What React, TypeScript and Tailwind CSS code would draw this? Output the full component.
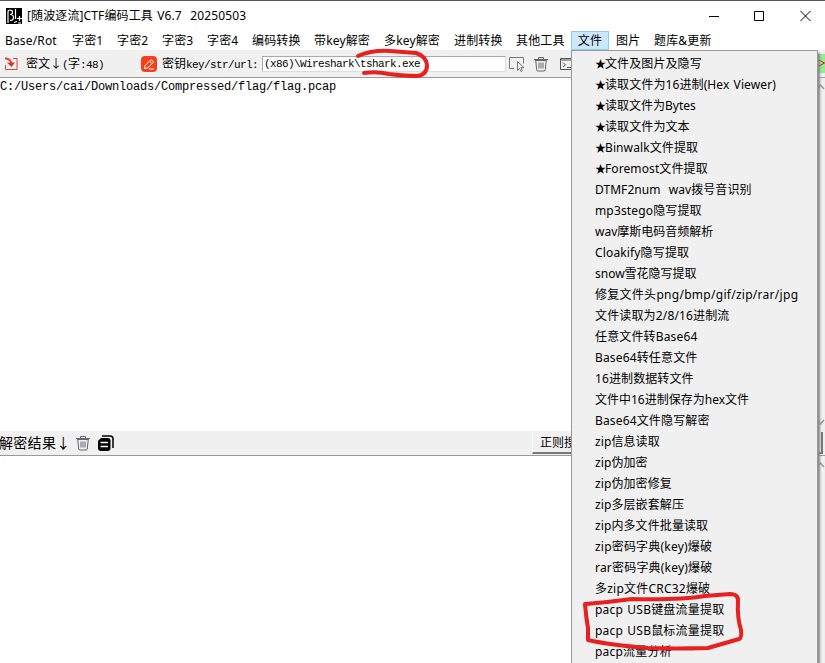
const menus = [
  { label: 'Base/Rot', width: 'w-[67px]' },
  { label: '字密1', width: 'w-[45px]' },
  { label: '字密2', width: 'w-[45px]' },
  { label: '字密3', width: 'w-[45px]' },
  { label: '字密4', width: 'w-[45px]' },
  { label: '编码转换', width: 'w-[62px]' },
  { label: '带key解密', width: 'w-[70px]' },
  { label: '多key解密', width: 'w-[70px]' },
  { label: '进制转换', width: 'w-[62px]' },
  { label: '其他工具', width: 'w-[55px]' },
  { label: '文件', width: 'w-[38px]', active: true },
  { label: '图片', width: 'w-[38px]' },
  { label: '题库&更新', width: 'w-[72px]' },
];

const fileItems = [
  { label: '★文件及图片及隐写' },
  { label: '★读取文件为16进制(Hex Viewer)' },
  { label: '★读取文件为Bytes', tracking: 'tracking-normal' },
  { label: '★读取文件为文本' },
  { label: '★Binwalk文件提取' },
  { label: '★Foremost文件提取' },
  { label: 'DTMF2num  wav拨号音识别', tracking: 'tracking-[0.05px]' },
  { label: 'mp3stego隐写提取', tracking: 'tracking-[0.15px]' },
  { label: 'wav摩斯电码音频解析', tracking: 'tracking-normal' },
  { label: 'Cloakify隐写提取', tracking: 'tracking-[0.15px]' },
  { label: 'snow雪花隐写提取', tracking: 'tracking-normal' },
  { label: '修复文件头png/bmp/gif/zip/rar/jpg', tracking: 'tracking-[0.28px]' },
  { label: '文件读取为2/8/16进制流', tracking: 'tracking-[0.15px]' },
  { label: '任意文件转Base64', tracking: 'tracking-[0.15px]' },
  { label: 'Base64转任意文件', tracking: 'tracking-[0.15px]' },
  { label: '16进制数据转文件' },
  { label: '文件中16进制保存为hex文件', tracking: 'tracking-normal' },
  { label: 'Base64文件隐写解密', tracking: 'tracking-[0.15px]' },
  { label: 'zip信息读取' },
  { label: 'zip伪加密' },
  { label: 'zip伪加密修复' },
  { label: 'zip多层嵌套解压' },
  { label: 'zip内多文件批量读取' },
  { label: 'zip密码字典(key)爆破', tracking: 'tracking-[0.2px]' },
  { label: 'rar密码字典(key)爆破', tracking: 'tracking-[0.2px]' },
  { label: '多zip文件CRC32爆破', tracking: 'tracking-[0.22px]' },
  { label: 'pacp USB键盘流量提取', tracking: 'tracking-[0.2px]' },
  { label: 'pacp USB鼠标流量提取', tracking: 'tracking-[0.2px]' },
  { label: 'pacp流量分析', tracking: 'tracking-[0.2px]' },
];

// Full-width glyphs take exactly two half-width cells
const Mono = ({ text, large = false, className = '' }: { text: string; large?: boolean; className?: string }) => (
  <span className={`shrink-0 whitespace-pre leading-4 ${className}`}>
    {text.split(/([^\x00-\x7f]+)/).map((part, i) =>
      i % 2 ? (
        <span key={i} className={`font-['Noto_Sans_CJK_SC',sans-serif] ${large ? 'text-[14px]' : 'text-[12px]'}`}>
          {part}
        </span>
      ) : (
        <span
          key={i}
          className={`font-['Liberation_Mono',monospace] ${large ? 'text-[12px] tracking-[-0.202px]' : 'text-[11px] tracking-[-0.601px]'}`}
        >
          {part}
        </span>
      ),
    )}
  </span>
);

const TrashIcon = () => (
  <svg className="h-4 w-4 shrink-0" viewBox="0 0 16 16" fill="none" stroke="#62666e">
    <path d="M1 3.500h14M2.500 4.500h11M5.500 3V1.500h5V3M2.700 4l1 9.800q.1 1.200 1.300 1.200h6q1.200 0 1.300-1.200l1-9.800M6 6.500v6M8 6.500v6M10 6.500v6" />
  </svg>
);

const App = () => {
  return (
    <div className="relative flex h-[663px] w-[825px] flex-col overflow-hidden bg-white font-['Noto_Sans','Noto_Sans_CJK_SC',sans-serif] text-[12px] text-black">
      {/* Title bar */}
      <header className="flex h-[31px] shrink-0 items-center border-t border-[#555] pl-[6px]">
        <svg className="mr-[5px] h-4 w-4" viewBox="0 0 16 16">
          <path fill="#000" d="M0 0h16v16H0z" />
          <path fill="none" stroke="#fff" strokeWidth="1.200" d="M2 15V4q0-2 2-2 2.500 0 2.500 2.200Q6.500 6.500 4 6.500q3.500 0 3.500 3T4 12.500M9.500 1v10M8 14.500l3-1M11 10.500h5M13.500 8v5M12 15h3" />
        </svg>
        <span className="whitespace-pre tracking-[0.12px] [word-spacing:1px]">[随波逐流]CTF编码工具 V6.7  20250503</span>
        <svg className="ml-auto mr-[14px] h-3 w-[104px]" viewBox="0 0 104 12" fill="none" stroke="#000">
          <path d="M2 6.500h10M47.500 1.500h9v9h-9zM93.500 1l10 10M103.500 1l-10 10" />
        </svg>
      </header>

      {/* Menu bar */}
      <nav className="flex h-[19px] shrink-0 pl-[5px] tracking-[0.15px]">
        {menus.map((menu) => (
          <div
            key={menu.label}
            className={`flex shrink-0 items-center whitespace-nowrap ${menu.width} ${menu.active ? 'mr-[7px] justify-center border border-[#91c9f7] bg-[#cce8ff]' : ''}`}
          >
            {menu.label}
          </div>
        ))}
      </nav>

      {/* Key input toolbar */}
      <div className="flex h-[28px] shrink-0 items-center border-b border-[#999] bg-[#f0f0f0] pl-1">
        <svg className="mr-[8px] h-[14px] w-[14px] shrink-0" viewBox="0 0 14 14" fill="none" stroke="#d9483b">
          <path d="M9 1.500h4v11H1.500V8" />
          <path d="M1 1.500q5 0 6.500 4.500" strokeWidth="2" />
          <path d="M3 5.500h8L7.500 10z" fill="#d33427" stroke="none" />
        </svg>
        <Mono className="w-[115px]" text="密文↓(字:48)" />
        <svg className="mr-[5px] h-4 w-4 shrink-0" viewBox="0 0 16 16" fill="none" stroke="#fff">
          <rect width="16" height="16" rx="4" fill="#f5401b" stroke="none" />
          <path d="M3.500 12.500l.7-3 6-6 2.500 2.500-6 6zM8.500 5l2.500 2.500M8 13h5" />
        </svg>
        <Mono className="w-[100px]" text="密钥key/str/url:" />
        <div className="flex h-4 w-[244px] shrink-0 items-center border border-[#aaa] border-b-[#ddd] border-r-[#ddd] bg-white pl-[1px]">
          <Mono text={'(x86)\\Wireshark\\tshark.exe'} />
        </div>
        <svg className="ml-[3px] mr-[8px] h-4 w-4 shrink-0" viewBox="0 0 16 16" fill="none" stroke="#777">
          <path d="M5 12.500H.500v-11h14v6M8.500 5.500v9l2-2 1.500 3 1.500-.8-1.500-3h3z" />
        </svg>
        <TrashIcon />
        <svg className="ml-[11px] h-4 w-4 shrink-0" viewBox="0 0 16 16" fill="none" stroke="#555">
          <path d="M.500 2.500h14v11H.500zM.500 4h14M3 6.500L5.500 9 3 11M7 11.500h5" />
        </svg>
        <svg className="ml-auto h-[19px] w-2" viewBox="0 0 8 19" fill="none">
          <path d="M0 0h8v19H0z" fill="#90ee90" />
          <path d="M0 6.500h3L7.500 9 3 11.500H0" stroke="#e11" />
        </svg>
      </div>

      {/* Source text */}
      <div className="flex h-[353px] shrink-0 items-start justify-between overflow-hidden">
        <Mono large text="C:/Users/cai/Downloads/Compressed/flag/flag.pcap" />
        <div className="flex h-full w-[7px] flex-col justify-between bg-[#f0f0f0] py-[6px]">
          <svg className="h-[6px] w-[7px]" viewBox="0 0 7 6" fill="none" stroke="#999" strokeWidth="1.500">
            <path d="M0 4l2.500-3L6 5" />
          </svg>
          <svg className="h-[6px] w-[7px]" viewBox="0 0 7 6" fill="none" stroke="#999" strokeWidth="1.500">
            <path d="M0 2l2.500 3L6 1" />
          </svg>
        </div>
      </div>

      {/* Result toolbar */}
      <div className="flex h-[25px] shrink-0 items-center border-b border-[#999] bg-[#f0f0f0]">
        <Mono large className="ml-[-1px] w-[76px] tracking-[0.3px]" text="解密结果↓" />
        <TrashIcon />
        <svg className="ml-[7px] h-4 w-4 shrink-0" viewBox="0 0 16 16" fill="none">
          <path d="M4 1h8q3 0 3 3v9" stroke="#000" strokeWidth="1.500" />
          <path d="M0 6l3-3h7q2.500 0 2.500 2.500V13q0 3-3 3H3q-3 0-3-3z" fill="#000" />
          <path d="M2.500 7.500H10M2.500 11.500H10" stroke="#fff" strokeWidth="1.500" />
        </svg>
        <button className="ml-[418px] flex h-[22px] w-[291px] shrink-0 items-end justify-between border-b-2 border-l border-r-2 border-[#777] border-l-white pl-[7px]">
          <span>正则搜索</span>
          <span>↑</span>
        </button>
      </div>

      {/* Result text */}
      <div className="flex grow justify-end">
        <div className="w-[7px] bg-[#f0f0f0] pt-[6px]">
          <svg className="h-[6px] w-[7px]" viewBox="0 0 7 6" fill="none" stroke="#999" strokeWidth="1.500">
            <path d="M0 4l2.500-3L6 5" />
          </svg>
        </div>
      </div>

      {/* File menu */}
      <div className="absolute left-[571px] top-[50px] h-[620px] w-[247px] border border-[#999] bg-[#f0f0f0] pl-[23px] pt-[2px] shadow-[2px_3px_2px_#888]">
        {fileItems.map(({ label, tracking = 'tracking-[0.1px]' }) => (
          <div key={label} className={`flex h-[21px] whitespace-pre leading-[21px] [word-spacing:1px] ${tracking}`}>
            {label.startsWith('★') && <span className="w-[10px] text-[11px]">★</span>}
            {label.replace('★', '')}
          </div>
        ))}
      </div>

      {/* Pen highlights */}
      <svg className="pointer-events-none absolute inset-0 h-full w-full" viewBox="0 0 825 663" fill="none" stroke="#e8201f" strokeWidth="4" strokeLinecap="round" strokeLinejoin="round">
        <path d="M358 56Q372 50 390 51L416 53Q426 56 427 65Q427 75 417 76Q405 76 389 74Q376 71 364 73" />
        <path d="M586 604Q610 602 632 599Q680 600 705 596L730 594Q739 594 738 602Q737 617 741 630Q742 638 739 639Q722 644 708 648Q675 649 648 648Q610 645 588 640L588 628Q586 617 585 604" />
      </svg>
    </div>
  );
};

export default App;
